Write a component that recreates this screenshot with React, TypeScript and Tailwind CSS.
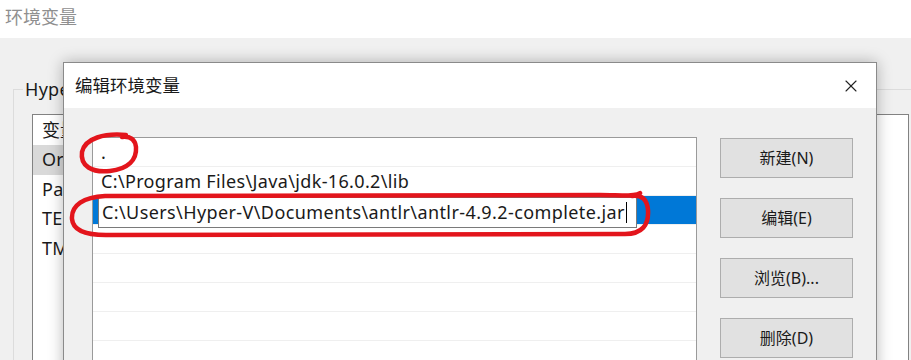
import { X } from 'lucide-react'

const bgRows = ['Or', 'Pa', 'TE', 'TM']
const paths = ['.', 'C:\\Program Files\\Java\\jdk-16.0.2\\lib', '', '', '', '', '', '']
const buttons = ['新建(N)', '编辑(E)', '浏览(B)...', '删除(D)']

function Annotations() {
  return (
    <svg className="pointer-events-none absolute inset-0 h-full w-full" viewBox="0 0 911 360">
      <g fill="none" stroke="#e3151c" strokeWidth="4.5" strokeLinecap="round" strokeLinejoin="round">
        <path d="M126 135 C105 133, 85 138, 82 152 C80 166, 92 173, 110 171 C128 169, 137 160, 136 147 C135 139, 130 136, 122 137" />
        <path d="M640 193 C634 197, 620 195, 600 195 L105 196 C84 197, 71 205, 72 219 C73 231, 86 235, 106 235 L625 234 C642 234, 649 225, 648 210 C647 199, 642 195, 632 196" />
      </g>
    </svg>
  )
}

export default function App() {
  return (
    <div className="relative h-[360px] w-[911px] overflow-hidden bg-[#f0f0f0] font-['Noto_Sans','Noto_Sans_CJK_SC',sans-serif] text-[#1a1a1a]">
      {/* background window */}
      <div className="h-[38px] bg-white pl-[5px] pt-[4px] text-[18px] leading-[26px] text-[#8f8f8f]">环境变量</div>
      <fieldset className="ml-[13px] mt-[39px] w-[920px] border border-[#dcdcdc] pb-4 pl-[18px]">
        <legend className="-ml-[9px] px-[2px] text-[18px] leading-[24px] tracking-[0.3px]">Hyper-V 的用户变量(U)</legend>
        <div className="mt-[13px] h-[300px] w-[877px] border border-[#828282] bg-white">
          <div className="flex h-[30px] items-center pl-[9px] text-[18px]">变量</div>
          {bgRows.map((r, i) => (
            <div
              key={r}
              className={`flex h-[29.5px] w-[160px] items-center pl-[9px] text-[18px] tracking-[0.3px] ${i === 0 ? 'bg-[#d9d9d9]' : ''}`}
            >
              {r}
            </div>
          ))}
        </div>
      </fieldset>

      {/* edit dialog */}
      <div className="absolute left-[63px] top-[62px] flex h-[320px] w-[814px] flex-col border border-[#8a8a8a] bg-[#f0f0f0] shadow-[0_0_14px_rgba(0,0,0,0.28)]">
        <div className="flex h-[45px] items-center justify-between bg-white pl-[11px] pr-[15px]">
          <span className="text-[17.5px]">编辑环境变量</span>
          <X className="h-[20px] w-[20px] text-[#222]" strokeWidth={1.3} />
        </div>
        <div className="flex pl-[28px] pt-[29px]">
          <div className="h-[240px] w-[605px] border border-[#9a9a9a] bg-white">
            {paths.map((p, i) => (
              <div
                key={i}
                className={`relative flex h-[29px] items-center border-b border-[#efefef] pl-[8px] text-[18px] tracking-[0.35px] ${i === 2 ? 'bg-[#0078d7]' : ''}`}
              >
                {p}
                {i === 2 && (
                  <div className="absolute left-[5px] top-[1px] flex h-[31px] w-[539px] items-center border border-[#7a7a7a] bg-white pl-[3px] tracking-[0.4px]">
                    <span>C:\Users\Hyper-V\Documents\antlr\antlr-4.9.2-complete.jar</span>
                    <span className="ml-[1px] h-[21px] w-px bg-black" />
                  </div>
                )}
              </div>
            ))}
          </div>
          <div className="ml-[23px] mt-[1px] flex flex-col gap-[20px]">
            {buttons.map((b) => (
              <div
                key={b}
                className="flex h-[40px] w-[133px] items-center justify-center border border-[#adadad] bg-[#e1e1e1] text-[16px]"
              >
                {b}
              </div>
            ))}
          </div>
        </div>
      </div>

      <Annotations />
    </div>
  )
}
